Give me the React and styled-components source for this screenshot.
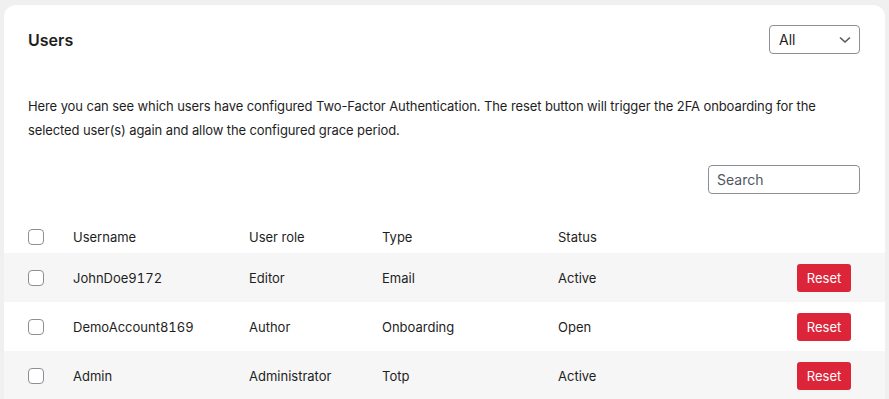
import React from 'react'
import styled, { createGlobalStyle } from 'styled-components'

const GlobalStyle = createGlobalStyle`
    html, body {
        margin: 0;
        padding: 0;
        background: #f0f0f1;
        font-family: Inter, "Noto Sans", "Liberation Sans", sans-serif;
        color: #1e1e1e;
    }
    * {
        box-sizing: border-box;
    }
`

const Page = styled.div`
    padding: 5px 4px 0 4px;
    height: 399px;
    overflow: hidden;
`

const Card = styled.div`
    background: #fff;
    border-radius: 12px 12px 0 0;
    min-height: 420px;
`

const Header = styled.div`
    display: flex;
    align-items: center;
    justify-content: space-between;
    padding: 20px 25px 0 24px;
`

const Title = styled.h2`
    margin: 0;
    font-size: 16px;
    font-weight: 600;
    color: #1e1e1e;
`

const SelectBox = styled.div`
    width: 91px;
    height: 29px;
    border: 1px solid #8c8f94;
    border-radius: 4px;
    display: flex;
    align-items: center;
    justify-content: space-between;
    padding: 0 8px 0 9px;
    font-size: 14px;
    color: #1e1e1e;
`

const Description = styled.p`
    margin: 40px 0 0 0;
    padding: 0 24px;
    font-size: 13px;
    line-height: 24px;
    letter-spacing: -0.1px;
`

const SearchRow = styled.div`
    display: flex;
    justify-content: flex-end;
    padding: 0 25px;
    margin-top: 23px;
`

const SearchInput = styled.input`
    width: 152px;
    height: 29px;
    border: 1px solid #8c8f94;
    border-radius: 4px;
    padding: 0 8px;
    font-family: inherit;
    font-size: 14px;
    color: #1e1e1e;
    outline: none;

    &::placeholder {
        color: #50575e;
    }
`

const Table = styled.div`
    margin-top: 27px;
`

const Row = styled.div`
    display: grid;
    grid-template-columns: 45px 176px 133px 176px 1fr auto;
    align-items: center;
    height: ${p => (p.$head ? '32px' : '49px')};
    padding: 0 34px 0 24px;
    background: ${p => (p.$shaded ? '#f6f6f6' : '#fff')};
    font-size: 13px;
    font-feature-settings: "tnum";
    color: #1e1e1e;
`

const Checkbox = styled.span`
    display: block;
    width: 16px;
    height: 16px;
    border: 1px solid #8c8f94;
    border-radius: 4px;
    background: #fff;
`

const ResetButton = styled.button`
    width: 54px;
    height: 28px;
    border: none;
    border-radius: 3px;
    background: #dc2538;
    color: #fff;
    font-family: inherit;
    font-size: 13px;
    padding: 0;
    cursor: pointer;
`

function Chevron() {
    return (
        <svg width="12" height="8" viewBox="0 0 12 8" fill="none">
            <path d="M1 1.5L6 6L11 1.5" stroke="#50575e" strokeWidth="1.5" />
        </svg>
    )
}

const users = [
    { id: 1, name: 'JohnDoe9172', role: 'Editor', type: 'Email', status: 'Active' },
    { id: 2, name: 'DemoAccount8169', role: 'Author', type: 'Onboarding', status: 'Open' },
    { id: 3, name: 'Admin', role: 'Administrator', type: 'Totp', status: 'Active' }
]

export default function App() {
    return (
        <Page>
            <GlobalStyle />
            <Card>
                <Header>
                    <Title>Users</Title>
                    <SelectBox>
                        <span>All</span>
                        <Chevron />
                    </SelectBox>
                </Header>
                <Description>
                    Here you can see which users have configured Two-Factor Authentication. The reset button will trigger the 2FA onboarding for the selected user(s) again and allow the configured grace period.
                </Description>
                <SearchRow>
                    <SearchInput placeholder="Search" />
                </SearchRow>
                <Table>
                    <Row $head>
                        <Checkbox />
                        <span>Username</span>
                        <span>User role</span>
                        <span>Type</span>
                        <span>Status</span>
                        <span />
                    </Row>
                    {users.map((u, i) => (
                        <Row key={u.id} $shaded={i % 2 === 0}>
                            <Checkbox />
                            <span>{u.name}</span>
                            <span>{u.role}</span>
                            <span>{u.type}</span>
                            <span>{u.status}</span>
                            <ResetButton>Reset</ResetButton>
                        </Row>
                    ))}
                </Table>
            </Card>
        </Page>
    )
}
